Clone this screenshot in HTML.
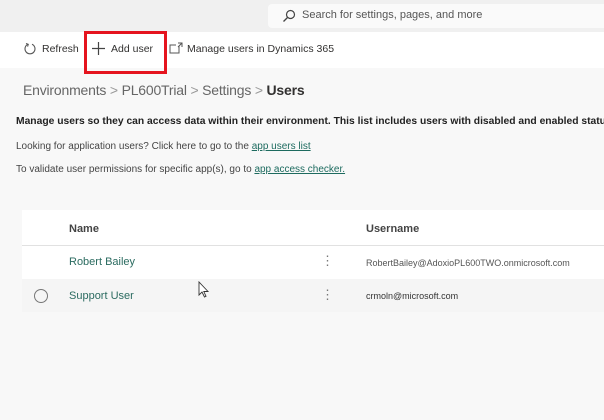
<!DOCTYPE html>
<html><head><style>
body{margin:0;width:604px;height:420px;overflow:hidden;background:#f8f8f8;font-family:"Liberation Sans",sans-serif;position:relative;color:#323130}
.a{position:absolute;white-space:nowrap}
.link{color:#1d6b5f;text-decoration:underline}
</style></head><body>
<div class="a" style="left:0;top:0;width:604px;height:32px;background:#f0f0f0"></div>
<div class="a" style="left:268px;top:4px;width:340px;height:24px;background:#fafafa;border-radius:4px"></div>
<svg class="a" style="left:282px;top:9px" width="14" height="14" viewBox="0 0 14 14"><circle cx="8.5" cy="5.5" r="4" fill="none" stroke="#444" stroke-width="1.2"/><path d="M5.5 8.5L1.5 12.5" stroke="#444" stroke-width="1.3"/></svg>
<div class="a" style="left:302px;top:9px;font-size:11px;color:#555">Search for settings, pages, and more</div>
<div class="a" style="left:0;top:32px;width:604px;height:36px;background:#fff"></div>
<svg class="a" style="left:23px;top:42px" width="14" height="14" viewBox="0 0 14 14"><path d="M5 2.2A5 5 0 1 0 9 2.2" fill="none" stroke="#555" stroke-width="1.1"/><path d="M3 1.5L5.3 2.3 4.6 4.6" fill="none" stroke="#555" stroke-width="1"/></svg>
<div class="a" style="left:42px;top:43px;font-size:10.5px">Refresh</div>
<svg class="a" style="left:92px;top:42px" width="13" height="13"><path d="M6.5 0V13M0 6.5H13" stroke="#444" stroke-width="1.2"/></svg>
<div class="a" style="left:111px;top:43px;font-size:10.5px">Add user</div>
<div class="a" style="left:84px;top:31px;width:77px;height:37px;border:3px solid #e5141e"></div>
<svg class="a" style="left:169px;top:42px" width="14" height="13"><path d="M10 4V11H1V3H7M9 1L13 1 13 5M13 1L9 5" fill="none" stroke="#555" stroke-width="1"/></svg>
<div class="a" style="left:187px;top:43px;font-size:10.5px">Manage users in Dynamics 365</div>
<div class="a" style="left:23px;top:82px;font-size:14px;color:#666;letter-spacing:-0.2px">Environments <span style="color:#999">&gt;</span> PL600Trial <span style="color:#999">&gt;</span> Settings <span style="color:#999">&gt;</span> <b style="color:#323130">Users</b></div>
<div class="a" style="left:16px;top:116px;font-size:10.3px;font-weight:bold;color:#222">Manage users so they can access data within their environment. This list includes users with disabled and enabled status</div>
<div class="a" style="left:16px;top:141px;font-size:10px;color:#444">Looking for application users? Click here to go to the <span class="link">app users list</span></div>
<div class="a" style="left:16px;top:164px;font-size:10px;color:#444">To validate user permissions for specific app(s), go to <span class="link">app access checker.</span></div>
<div class="a" style="left:22px;top:210px;width:582px;height:102px;background:#fff"></div>
<div class="a" style="left:22px;top:245px;width:582px;height:1px;background:#e1e1e1"></div>
<div class="a" style="left:22px;top:279px;width:582px;height:33px;background:#f5f5f5"></div>
<div class="a" style="left:69px;top:223px;font-size:11px;font-weight:bold;color:#444">Name</div>
<div class="a" style="left:366px;top:223px;font-size:11px;font-weight:bold;color:#444">Username</div>
<div class="a" style="left:69px;top:256px;font-size:11px;color:#2b6b60">Robert Bailey</div>
<div class="a" style="left:321px;top:253px;font-size:13px;color:#777">⋮</div>
<div class="a" style="left:366px;top:258px;font-size:9px;color:#555">RobertBailey@AdoxioPL600TWO.onmicrosoft.com</div>
<div class="a" style="left:34px;top:289px;width:12px;height:12px;border:1px solid #777;border-radius:50%"></div>
<div class="a" style="left:69px;top:290px;font-size:11px;color:#2b6b60">Support User</div>
<div class="a" style="left:321px;top:287px;font-size:13px;color:#777">⋮</div>
<div class="a" style="left:366px;top:291px;font-size:9px;color:#333">crmoln@microsoft.com</div>
<svg class="a" style="left:198px;top:281px" width="12" height="18"><path d="M1 1V14L4 11 6.5 16 8 15.3 5.8 10.5 10 10.5Z" fill="#fff" stroke="#333" stroke-width="0.9"/></svg>
</body></html>
